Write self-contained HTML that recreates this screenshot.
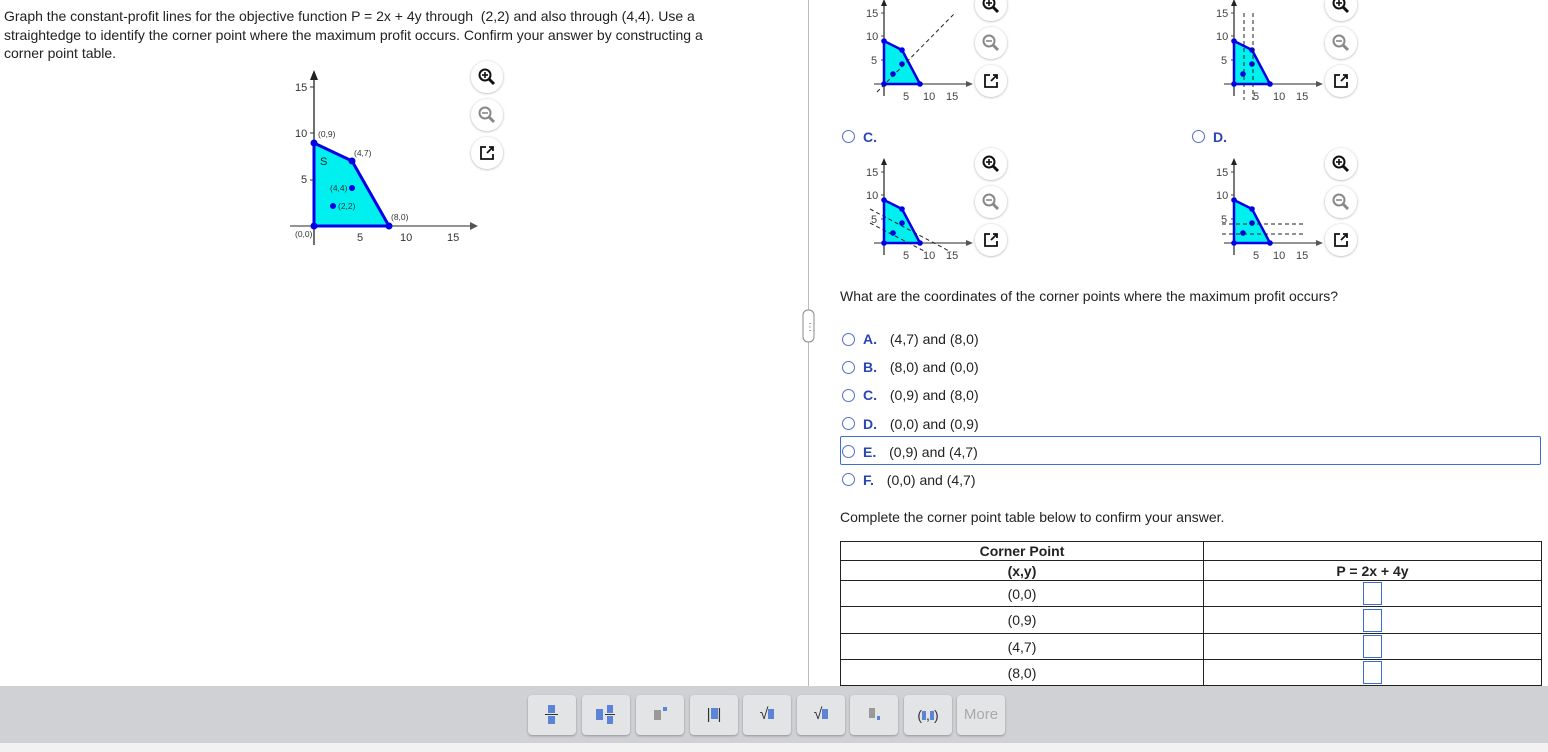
<!DOCTYPE html>
<html><head><style>
body{margin:0;width:1548px;height:752px;overflow:hidden;background:#fff;font-family:"Liberation Sans",Arial,sans-serif;color:#222;position:relative}
.a{position:absolute}
.q{font-size:14px;line-height:18.5px}
.rad{position:absolute;width:11px;height:11px;border:1.5px solid #5470c8;border-radius:50%}
.lbl{position:absolute;font-size:14px;color:#222}
.lbl b{color:#2a46b4;margin-right:9px}
table{border-collapse:collapse;position:absolute;left:840px;top:541px;width:702px;font-size:14px}
td{border:1px solid #222;text-align:center;padding:0}
.ib{display:inline-block;width:17px;height:21px;border:1px solid #3a6fd0;vertical-align:middle}
.tb{position:absolute;top:695px;width:48px;height:40px;background:#e3e4e6;border-radius:4px;box-shadow:0 1px 2px rgba(0,0,0,.3)}
</style></head><body>
<div class="a q" style="left:4px;top:7px;width:732px">Graph the constant-profit lines for the objective function P = 2x + 4y through &nbsp;(2,2) and also through (4,4). Use a straightedge to identify the corner point where the maximum profit occurs. Confirm your answer by constructing a corner point table.</div>

<svg class="a" style="left:0;top:0" width="1548" height="752" font-family="Liberation Sans,Arial,sans-serif">
<g font-size="11" fill="#333">
<line x1="290" y1="226" x2="470" y2="226" stroke="#555" stroke-width="1.3"/><path d="M470 222 L478 226 L470 230Z" fill="#555"/>
<line x1="314" y1="245" x2="314" y2="76" stroke="#222" stroke-width="1.3"/><path d="M310 80 L314 70 L318 80Z" fill="#222"/>
<polygon points="314,226 314,143 352,161 389,226" fill="#00f0f0" stroke="#0000e6" stroke-width="3" stroke-linejoin="round"/>
<g fill="#0000e6"><circle cx="314" cy="226" r="3.5"/><circle cx="314" cy="143" r="3.5"/><circle cx="352" cy="161" r="3.5"/><circle cx="389" cy="226" r="3.5"/><circle cx="352" cy="188" r="3"/><circle cx="333" cy="206" r="3"/></g>
<text x="295" y="91">15</text><line x1="310" y1="87" x2="314" y2="87" stroke="#333"/>
<text x="295" y="137">10</text><line x1="310" y1="133" x2="314" y2="133" stroke="#333"/>
<text x="301" y="183">5</text><line x1="310" y1="180" x2="314" y2="180" stroke="#333"/>
<text x="357" y="241">5</text><text x="400" y="241">10</text><text x="447" y="241">15</text>
<g font-size="8.5"><text x="318" y="137">(0,9)</text><text x="354" y="156">(4,7)</text><text x="330" y="191">(4,4)</text><text x="338" y="209">(2,2)</text><text x="391" y="220">(8,0)</text><text x="295" y="237">(0,0)</text></g>
<text x="320" y="165" font-size="11" fill="#222">S</text>
</g>
<line x1="808.5" y1="0" x2="808.5" y2="686" stroke="#bbb"/>
<rect x="803" y="310" width="11" height="32" rx="5" fill="#fff" stroke="#888"/>
<text x="805" y="330" font-size="10" fill="#555">⋮</text>

<g id="m" font-size="11" fill="#444">
<line x1="874" y1="84" x2="968" y2="84" stroke="#555" stroke-width="1.2"/><path d="M966 81 L973 84 L966 87Z" fill="#555"/>
<line x1="884" y1="96" x2="884" y2="2" stroke="#222" stroke-width="1.2"/><path d="M881 6 L884 -1 L887 6Z" fill="#222"/>
<line x1="881" y1="13" x2="884" y2="13" stroke="#444"/><line x1="881" y1="36" x2="884" y2="36" stroke="#444"/><line x1="881" y1="60" x2="884" y2="60" stroke="#444"/>
<polygon points="884,84 884,41 902,50 920,84" fill="#00f0f0" stroke="#0000e6" stroke-width="2.5" stroke-linejoin="round"/>
<g fill="#0000e6"><circle cx="884" cy="84" r="2.8"/><circle cx="884" cy="41" r="2.8"/><circle cx="902" cy="50" r="2.8"/><circle cx="920" cy="84" r="2.8"/><circle cx="902" cy="64" r="2.8"/><circle cx="893" cy="74" r="2.8"/></g>
<text x="866" y="17">15</text><text x="866" y="40">10</text><text x="871" y="64">5</text>
<text x="903" y="100">5</text><text x="923" y="100">10</text><text x="946" y="100">15</text>
</g>
<line x1="877" y1="92" x2="955" y2="13" stroke="#222" stroke-dasharray="4,3"/>
<use href="#m" x="350"/>
<line x1="1244" y1="13" x2="1244" y2="100" stroke="#222" stroke-dasharray="4,3"/>
<line x1="1253" y1="13" x2="1253" y2="100" stroke="#222" stroke-dasharray="4,3"/>
<use href="#m" y="159"/>
<line x1="870" y1="209" x2="951" y2="252" stroke="#222" stroke-dasharray="4,3"/>
<line x1="870" y1="223" x2="926" y2="252" stroke="#222" stroke-dasharray="4,3"/>
<use href="#m" x="350" y="159"/>
<line x1="1222" y1="224" x2="1304" y2="224" stroke="#222" stroke-dasharray="4,3"/>
<line x1="1222" y1="234" x2="1304" y2="234" stroke="#222" stroke-dasharray="4,3"/>
</svg>

<svg class="a" style="left:0;top:0" width="1548" height="300">
<defs><g id="zi2"><circle cx="-2" cy="-2" r="5.5" stroke-width="2"/><line x1="2" y1="2" x2="7" y2="7" stroke-width="3"/></g>
<filter id="sh"><feDropShadow dx="0" dy="0.5" stdDeviation="1.2" flood-opacity="0.35"/></filter></defs>
<g id="b3">
<circle cx="487" cy="77" r="16" fill="#fff" filter="url(#sh)"/><g transform="translate(487,77)" stroke="#111" fill="none"><use href="#zi2"/><line x1="-5" y1="-2" x2="1" y2="-2" stroke-width="1.6"/><line x1="-2" y1="-5" x2="-2" y2="1" stroke-width="1.6"/></g>
<circle cx="487" cy="115" r="16" fill="#fff" filter="url(#sh)"/><g transform="translate(487,115)" stroke="#888" fill="none"><use href="#zi2"/><line x1="-5" y1="-2" x2="1" y2="-2" stroke-width="1.6"/></g>
<circle cx="487" cy="153" r="16" fill="#fff" filter="url(#sh)"/><g transform="translate(487,153)" stroke="#111" fill="none" stroke-width="1.8"><path d="M-1 -6 H-6 V6 H6 V1"/><path d="M0 0 L6 -6 M2 -6 H6 V-2"/></g>
</g>
<use href="#b3" x="504" y="-72"/><use href="#b3" x="854" y="-72"/>
<use href="#b3" x="504" y="87"/><use href="#b3" x="854" y="87"/>
</svg>

<div class="rad" style="left:842px;top:130px"></div><div class="lbl" style="left:863px;top:129px"><b>C.</b></div>
<div class="rad" style="left:1192px;top:130px"></div><div class="lbl" style="left:1213px;top:129px"><b>D.</b></div>

<div class="lbl" style="left:840px;top:288px">What are the coordinates of the corner points where the maximum profit occurs?</div>
<div class="a" style="left:840px;top:436px;width:699px;height:27px;border:1.5px solid #3a6fd0;border-radius:2px"></div>
<div class="rad" style="left:842px;top:333px"></div><div class="lbl" style="left:863px;top:331px"><b>A.</b> (4,7) and (8,0)</div>
<div class="rad" style="left:842px;top:361px"></div><div class="lbl" style="left:863px;top:359px"><b>B.</b> (8,0) and (0,0)</div>
<div class="rad" style="left:842px;top:389px"></div><div class="lbl" style="left:863px;top:387px"><b>C.</b> (0,9) and (8,0)</div>
<div class="rad" style="left:842px;top:417px"></div><div class="lbl" style="left:863px;top:416px"><b>D.</b> (0,0) and (0,9)</div>
<div class="rad" style="left:842px;top:445px"></div><div class="lbl" style="left:863px;top:444px"><b>E.</b> (0,9) and (4,7)</div>
<div class="rad" style="left:842px;top:473px"></div><div class="lbl" style="left:863px;top:472px"><b>F.</b> (0,0) and (4,7)</div>
<div class="lbl" style="left:840px;top:509px">Complete the corner point table below to confirm your answer.</div>

<table>
<tr style="height:19px"><td style="width:362px;font-weight:bold">Corner Point</td><td></td></tr>
<tr style="height:20px"><td style="font-weight:bold">(x,y)</td><td style="font-weight:bold">P = 2x + 4y</td></tr>
<tr style="height:26px"><td>(0,0)</td><td><span class="ib"></span></td></tr>
<tr style="height:27px"><td>(0,9)</td><td><span class="ib"></span></td></tr>
<tr style="height:26px"><td>(4,7)</td><td><span class="ib"></span></td></tr>
<tr style="height:26px"><td>(8,0)</td><td><span class="ib"></span></td></tr>
</table>

<div class="a" style="left:0;top:686px;width:1548px;height:57px;background:#d0d1d5"></div>
<div class="a" style="left:0;top:743px;width:1548px;height:9px;background:#f2f2f2"></div>
<div class="tb" style="left:528px"><div class="a" style="left:20px;top:10px;width:7px;height:8px;background:#5b84d6"></div><div class="a" style="left:17px;top:19px;width:13px;height:1px;background:#333"></div><div class="a" style="left:20px;top:21px;width:7px;height:8px;background:#5b84d6"></div></div>
<div class="tb" style="left:582px"><div class="a" style="left:14px;top:14px;width:7px;height:11px;background:#5b84d6"></div><div class="a" style="left:25px;top:10px;width:6px;height:8px;background:#5b84d6"></div><div class="a" style="left:23px;top:19px;width:10px;height:1px;background:#333"></div><div class="a" style="left:25px;top:21px;width:6px;height:8px;background:#5b84d6"></div></div>
<div class="tb" style="left:636px"><div class="a" style="left:18px;top:15px;width:7px;height:10px;background:#999"></div><div class="a" style="left:27px;top:12px;width:4px;height:4px;background:#5b84d6"></div></div>
<div class="tb" style="left:690px;font-size:15px;text-align:center;line-height:40px;color:#333">|<span style="display:inline-block;width:7px;height:11px;background:#5b84d6"></span>|</div>
<div class="tb" style="left:743px;font-size:16px;line-height:40px;color:#333;text-align:center">√<span style="display:inline-block;width:6px;height:10px;background:#5b84d6"></span></div>
<div class="tb" style="left:797px;font-size:16px;line-height:40px;color:#333;text-align:center">√<span style="display:inline-block;width:6px;height:10px;background:#5b84d6"></span></div>
<div class="tb" style="left:850px"><div class="a" style="left:19px;top:13px;width:6px;height:10px;background:#999"></div><div class="a" style="left:27px;top:21px;width:3px;height:4px;background:#5b84d6"></div></div>
<div class="tb" style="left:904px;font-size:14px;line-height:40px;color:#333;text-align:center">(<span style="display:inline-block;width:4px;height:9px;background:#5b84d6"></span>,<span style="display:inline-block;width:4px;height:9px;background:#5b84d6"></span>)</div>
<div class="tb" style="left:957px;font-size:15px;line-height:40px;color:#aaa;text-align:center">More</div>
</body></html>
